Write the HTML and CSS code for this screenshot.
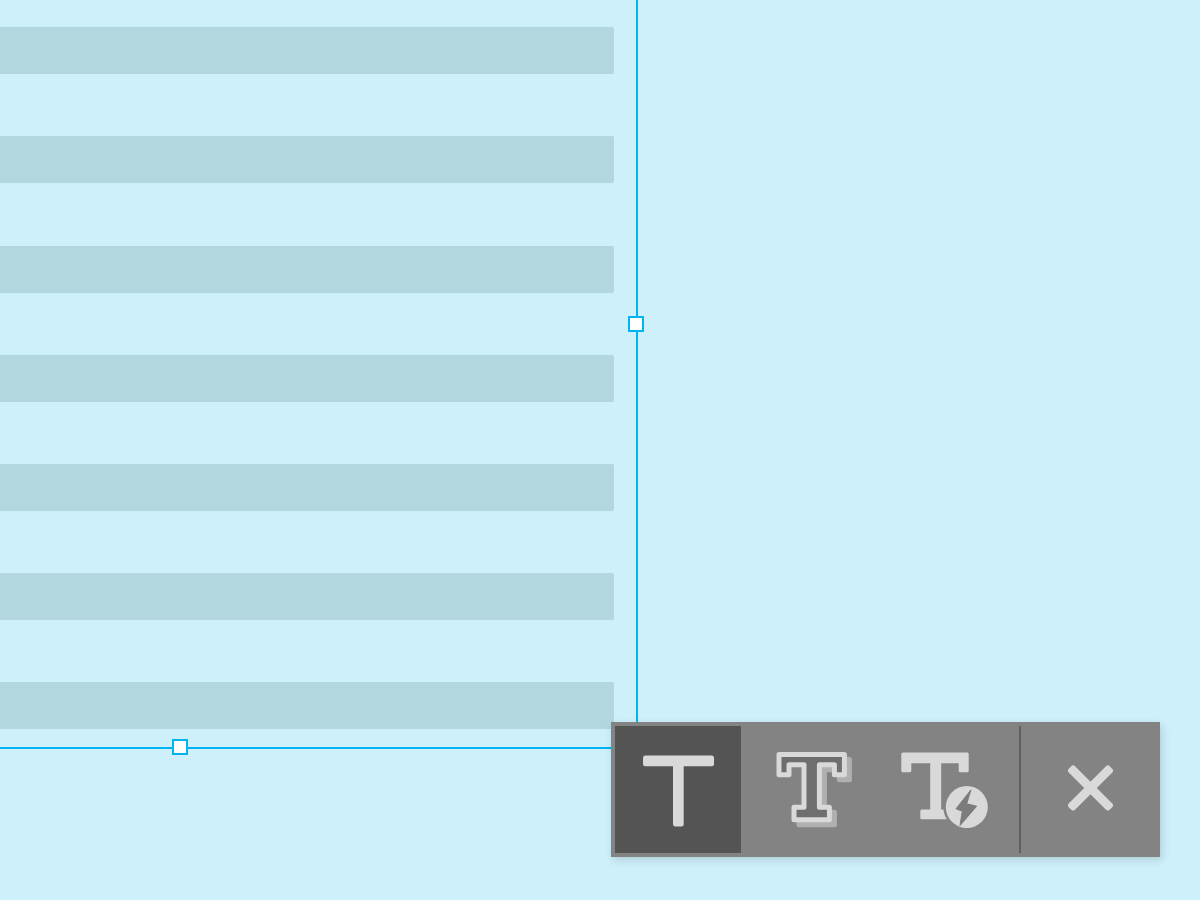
FILE: index.html
```html
<!DOCTYPE html>
<html>
<head>
  <title>Text block editor</title>
  <link rel="stylesheet" href="styles.css">
</head>
<body>
  <div id="canvas">
    <div id="text-box">
      <div class="line"></div>
      <div class="line"></div>
      <div class="line"></div>
      <div class="line"></div>
      <div class="line"></div>
      <div class="line"></div>
      <div class="line"></div>
      <div class="handle" id="handle-right"></div>
      <div class="handle" id="handle-bottom"></div>
    </div>

    <div id="toolbar">
      <div class="tool active" id="tool-plain">
        <svg width="80" height="80" viewBox="0 0 80 80">
          <rect class="glyph" x="5" y="5.5" width="71" height="10.7" rx="2.5"/>
          <rect class="glyph" x="35" y="10" width="10.7" height="66.5" rx="2.5"/>
        </svg>
      </div>
      <div class="tool" id="tool-outline">
        <svg width="90" height="90" viewBox="0 0 90 90">
          <path class="outline-shadow" d="M50 14.5H82.4V34.7H72.4V24.8H57.4V67.2H67.4V79.7H32V67.2H42V14.5Z"/>
          <path class="outline-face" d="M12 9.5H77.4V29.7H67.4V19.8H52.4V62.2H62.4V74.7H27V62.2H37V19.8H22V29.7H12Z"/>
        </svg>
      </div>
      <div class="tool" id="tool-fast">
        <svg width="100" height="90" viewBox="0 0 100 90">
          <path class="glyph rounded" d="M8.8 9H73.2V25.7H66.2V16.7H45.7V66H54.7V72.7H27.8V66H37.7V16.7H15.8V25.7H8.8Z"/>
          <circle class="ring" cx="72.8" cy="62" r="23.5"/>
          <circle class="glyph" cx="72.8" cy="62" r="21"/>
          <path class="bolt" d="M77 44.8L62 63.8L68.3 66.2L66 80.5L82.7 61.2L72.7 58.8Z"/>
        </svg>
      </div>
      <div class="divider"></div>
      <div class="tool" id="tool-close">
        <svg width="60" height="60" viewBox="0.5 2 60 60">
          <rect class="glyph" x="1" y="25.5" width="58" height="9" rx="3" transform="rotate(45 30 30)"/>
          <rect class="glyph" x="1" y="25.5" width="58" height="9" rx="3" transform="rotate(-45 30 30)"/>
        </svg>
      </div>
    </div>
  </div>
</body>
</html>
```

FILE: styles.css
```css
html, body {
  margin: 0;
  padding: 0;
  background: #cef0fb;
}

#canvas {
  position: relative;
  width: 1200px;
  height: 900px;
  overflow: hidden;
}

#text-box {
  position: relative;
  box-sizing: border-box;
  width: 638px;
  height: 749px;
  padding: 27.3px 22px 0 0;
  display: flex;
  flex-direction: column;
  gap: 62.17px;
  border-right: 2px solid #00b4f0;
  border-bottom: 2px solid #00b4f0;
}

.line {
  height: 47px;
  flex: none;
  background: #b2d7df;
  border-radius: 0 2px 2px 0;
}

.handle {
  position: absolute;
  box-sizing: border-box;
  width: 16px;
  height: 16px;
  background: #fff;
  border: 2px solid #00b4f0;
}

#handle-right {
  top: 316px;
  right: -8px;
}

#handle-bottom {
  left: 172px;
  bottom: -8px;
}

#toolbar {
  position: absolute;
  left: 611px;
  top: 722px;
  box-sizing: border-box;
  width: 549px;
  height: 135px;
  padding: 4px 0 4px 4px;
  display: flex;
  background: #838383;
  box-shadow: 2px 3px 8px rgba(0, 0, 0, 0.15);
}

.tool {
  display: flex;
  align-items: center;
  justify-content: center;
  flex: none;
}

.active {
  background: #545454;
}

#tool-plain {
  width: 126px;
}

#tool-outline {
  width: 142px;
}

#tool-fast {
  width: 122px;
}

#tool-close {
  width: 139px;
}

.divider {
  width: 2px;
  flex: none;
  margin-left: 14px;
  background: #5f5f5f;
}

.glyph {
  fill: #d9d9d9;
}

.rounded {
  stroke: #d9d9d9;
  stroke-width: 3;
  stroke-linejoin: round;
}

.outline-shadow {
  fill: #b0b0b0;
  stroke: #b0b0b0;
  stroke-width: 5;
  stroke-linejoin: round;
}

.outline-face {
  fill: #6e6e6e;
  stroke: #d9d9d9;
  stroke-width: 5;
  stroke-linejoin: round;
}

.ring {
  fill: #838383;
}

.bolt {
  fill: #7c7c7c;
  stroke: #7c7c7c;
  stroke-width: 1;
  stroke-linejoin: round;
}
```
